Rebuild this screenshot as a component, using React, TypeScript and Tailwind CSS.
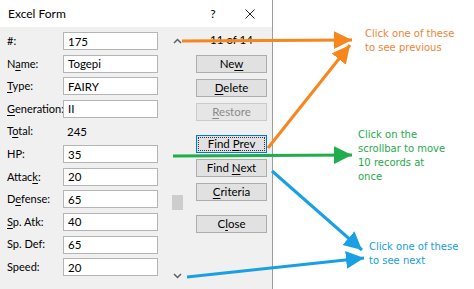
import React from 'react';

type Field = {
  label: string;
  at?: number;
  value: string;
  plain?: boolean;
};

const fields: Field[] = [
  { label: '#:', value: '175' },
  { label: 'Name:', at: 1, value: 'Togepi' },
  { label: 'Type:', at: 0, value: 'FAIRY' },
  { label: 'Generation:', at: 0, value: 'II' },
  { label: 'Total:', at: 1, value: '245', plain: true },
  { label: 'HP:', value: '35' },
  { label: 'Attack:', at: 5, value: '20' },
  { label: 'Defense:', at: 1, value: '65' },
  { label: 'Sp. Atk:', at: 0, value: '40' },
  { label: 'Sp. Def:', value: '65' },
  { label: 'Speed:', value: '20' },
];

// underline the keyboard accelerator letter
const Accel = ({ text, at }: { text: string; at?: number }) => {
  if (at === undefined) return <span className="whitespace-pre">{text}</span>;
  return (
    <span className="whitespace-pre">
      {text.slice(0, at)}
      <span className="underline underline-offset-2">{text[at]}</span>
      {text.slice(at + 1)}
    </span>
  );
};

type BtnProps = { text: string; at?: number; disabled?: boolean; focused?: boolean; className?: string };

const Btn = ({ text, at, disabled, focused, className = '' }: BtnProps) => {
  if (focused) {
    return (
      <div className={`flex h-[18px] items-center justify-center border border-[#0078d7] bg-[#e1e1e1] p-[1px] ${className}`}>
        <div className="flex h-full w-full items-center justify-center border border-dotted border-[#333]">
          <Accel text={text} at={at} />
        </div>
      </div>
    );
  }
  return (
    <div
      className={`flex h-[18px] items-center justify-center border ${
        disabled ? 'border-[#cacaca] bg-[#e6e6e6] text-[#8a8a8a]' : 'border-[#adadad] bg-[#e1e1e1]'
      } ${className}`}
    >
      <Accel text={text} at={at} />
    </div>
  );
};

const Chevron = ({ up }: { up?: boolean }) => (
  <svg width="9" height="6" viewBox="0 0 9 6">
    <polyline
      points={up ? '1,5 4.5,1.5 8,5' : '1,1 4.5,4.5 8,1'}
      fill="none"
      stroke="#606060"
      strokeWidth={1.5}
    />
  </svg>
);

export default function App() {
  return (
    <div className="relative flex h-[289px] w-[474px] overflow-hidden bg-white font-['Lato',sans-serif] text-[11.5px] text-black">
      {/* dialog */}
      <div className="flex w-[273px] shrink-0 flex-col border-r border-[#9c9c9c]">
        <div className="flex h-[27px] shrink-0 items-center bg-white pl-[8px] text-[12px]">
          <span>Excel Form</span>
          <span className="ml-auto w-[10px] text-center">?</span>
          <svg className="ml-[27px] mr-[17px]" width="10" height="10" viewBox="0 0 10 10">
            <path d="M0.5 0.5 L9.5 9.5 M9.5 0.5 L0.5 9.5" stroke="#222" strokeWidth={1} />
          </svg>
        </div>

        <div className="flex flex-1 bg-[#f0f0f0]">
          {/* fields */}
          <div className="flex w-[168px] shrink-0 flex-col pl-[7px] pt-[3px]">
            {fields.map((f) => (
              <div key={f.label} className="flex h-[22.6px] items-center">
                <span className="w-[56px] shrink-0 text-[11px]">
                  <Accel text={f.label} at={f.at} />
                </span>
                {f.plain ? (
                  <span className="pl-[4px]">{f.value}</span>
                ) : (
                  <div className="flex h-[18px] w-[95px] items-center border border-[#b4b4b4] bg-white pl-[4px]">
                    {f.value}
                  </div>
                )}
              </div>
            ))}
          </div>

          {/* scrollbar */}
          <div className="flex w-[19px] shrink-0 flex-col items-center">
            <div className="mt-[11px]">
              <Chevron up />
            </div>
            <div className="mt-[151px] h-[15px] w-[11px] bg-[#cdcdcd]" />
            <div className="mt-auto mb-[10px]">
              <Chevron />
            </div>
          </div>

          {/* buttons */}
          <div className="ml-[9px] flex w-[71px] shrink-0 flex-col pt-[5px]">
            <div className="h-[16px] text-center leading-[16px]">11 of 14</div>
            <div className="mt-[7px] flex flex-col gap-[6px]">
              <Btn text="New" at={2} />
              <Btn text="Delete" at={0} />
              <Btn text="Restore" at={0} disabled />
            </div>
            <div className="mt-[14px] flex flex-col gap-[6px]">
              <Btn text="Find Prev" at={5} focused />
              <Btn text="Find Next" at={5} />
              <Btn text="Criteria" at={0} />
            </div>
            <Btn text="Close" at={1} className="mt-[14px]" />
          </div>
        </div>
      </div>

      {/* annotations */}
      <div className="flex flex-1 flex-col font-['DejaVu_Sans',sans-serif] text-[10px] leading-[14px]">
        <div className="ml-[92px] mt-[27px] text-[#ef8433]">
          Click one of these
          <br />
          to see previous
        </div>
        <div className="ml-[85px] mt-[73px] text-[#1faa4c]">
          Click on the
          <br />
          scrollbar to move
          <br />
          10 records at
          <br />
          once
        </div>
        <div className="ml-[96px] mt-[56px] text-[#169de0]">
          Click one of these
          <br />
          to see next
        </div>
      </div>

      {/* arrows drawn over the dialog */}
      <svg className="pointer-events-none absolute inset-0" width="474" height="289" viewBox="0 0 474 289">
        <defs>
          <marker id="hOrange" markerUnits="userSpaceOnUse" markerWidth="20" markerHeight="20" refX="18" refY="9" orient="auto">
            <polygon points="0,0 18,9 0,18" fill="#f7861c" />
          </marker>
          <marker id="hGreen" markerUnits="userSpaceOnUse" markerWidth="20" markerHeight="20" refX="18" refY="9" orient="auto">
            <polygon points="0,0 18,9 0,18" fill="#1fae4b" />
          </marker>
          <marker id="hBlue" markerUnits="userSpaceOnUse" markerWidth="20" markerHeight="20" refX="18" refY="9" orient="auto">
            <polygon points="0,0 18,9 0,18" fill="#18a0e3" />
          </marker>
        </defs>
        <line x1="182" y1="41" x2="352" y2="40" stroke="#f7861c" strokeWidth="3" markerEnd="url(#hOrange)" />
        <line x1="268" y1="148" x2="350" y2="45" stroke="#f7861c" strokeWidth="3" markerEnd="url(#hOrange)" />
        <line x1="173" y1="156" x2="352" y2="155" stroke="#1fae4b" strokeWidth="3" markerEnd="url(#hGreen)" />
        <line x1="272" y1="171" x2="362" y2="250" stroke="#18a0e3" strokeWidth="3" markerEnd="url(#hBlue)" />
        <line x1="187" y1="277" x2="364" y2="258" stroke="#18a0e3" strokeWidth="3" markerEnd="url(#hBlue)" />
      </svg>
    </div>
  );
}
